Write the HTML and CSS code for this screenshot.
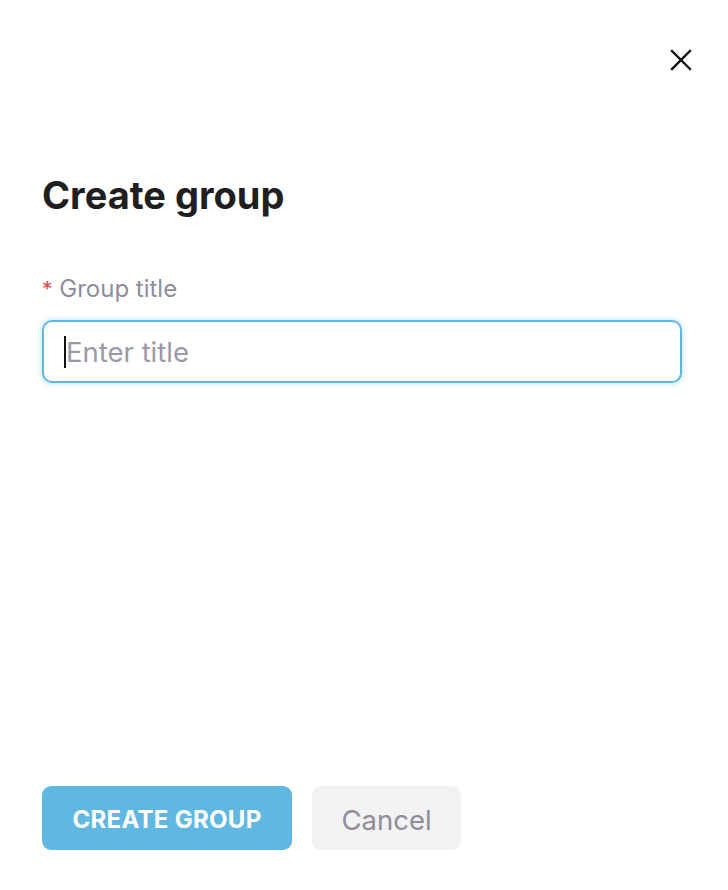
FILE: index.html
```html
<!DOCTYPE html>
<html lang="en">
<head>
<meta charset="utf-8">
<title>Create group</title>
<link rel="stylesheet" href="styles.css">
</head>
<body>
<div class="modal">
  <div class="modal-top">
    <button class="close-btn" aria-label="Close">
      <svg width="22" height="22" viewBox="0 0 22 22"><path d="M2 2L20 20M20 2L2 20" stroke="#111" stroke-width="2.4" stroke-linecap="square" fill="none"/></svg>
    </button>
  </div>
  <h1 class="title">Create group</h1>
  <div class="field">
    <label class="label"><span class="req">*</span> Group title</label>
    <div class="input"><span class="caret"></span><span class="placeholder">Enter title</span></div>
  </div>
  <div class="spacer"></div>
  <div class="actions">
    <button class="btn btn-primary">CREATE GROUP</button>
    <button class="btn btn-secondary">Cancel</button>
  </div>
</div>
</body>
</html>
```
FILE: styles.css
```css
* { box-sizing: border-box; }
html, body { margin: 0; padding: 0; background: #fff; }
body { font-family: Inter, "Noto Sans", sans-serif; }
.modal {
  height: 890px;
  display: flex;
  flex-direction: column;
  padding: 0 46px 40px 42px;
}
.modal-top {
  display: flex;
  justify-content: flex-end;
  padding-top: 49px;
  margin-right: -10px;
}
.close-btn {
  border: 0; background: none; padding: 0; width: 22px; height: 22px; cursor: pointer;
}
.close-btn svg { display: block; }
.title {
  margin: 101px 0 0 0;
  font-size: 38px;
  font-weight: 700;
  color: #1f1f1f;
  line-height: 46px;
}
.field { margin-top: 56px; }
.label {
  display: block;
  font-size: 24px;
  color: #8e8d99;
  line-height: 30px;
}
.req { color: #e5484d; font-size: 21px; }
.input {
  margin-top: 15px;
  height: 63px;
  border: 2px solid #5fb6e1;
  border-radius: 10px;
  box-shadow: 0 0 4px 2px rgba(95, 182, 225, 0.25);
  display: flex;
  align-items: center;
  padding-left: 20px;
}
.caret {
  width: 2px; height: 32px; background: #111;
}
.placeholder { font-size: 27.5px; color: #9a99a5; }
.spacer { flex: 1; }
.actions { display: flex; gap: 20px; }
.btn {
  height: 64px;
  border: 0;
  border-radius: 9px;
  font-family: Inter, "Noto Sans", sans-serif;
  cursor: pointer;
  padding: 3px 0 0 0;
}
.btn-primary {
  width: 250px;
  background: #60b8e2;
  color: #fff;
  font-size: 24px;
  font-weight: 700;
  letter-spacing: 0.3px;
}
.btn-secondary {
  width: 149px;
  background: #f2f2f3;
  color: #8e8d99;
  font-size: 27.5px;
  font-weight: 400;
}
```
